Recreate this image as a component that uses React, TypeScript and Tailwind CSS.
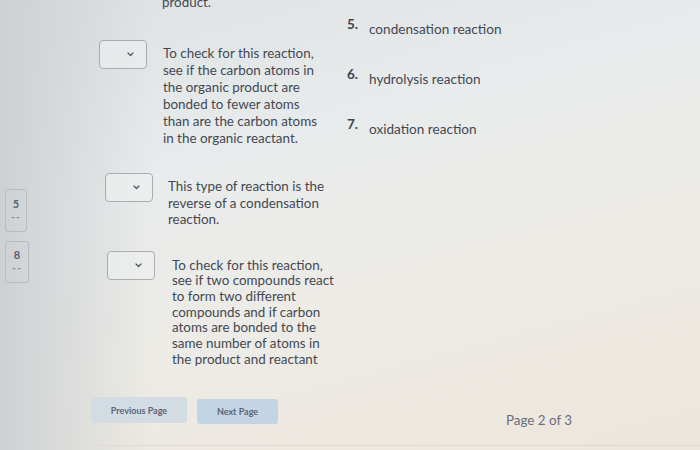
import React from "react"

const font = { fontFamily: "Lato, 'Open Sans', sans-serif" }

function Dropdown({ className }: { className?: string }) {
  return (
    <div className={`flex h-[29px] w-[48px] shrink-0 items-center justify-end rounded-[4px] border border-[#a9adb2] bg-[#eef0f0]/60 pr-[12px] ${className || ""}`}>
      <svg width="7" height="5" viewBox="0 0 7 5" fill="none">
        <path d="M1 1l2.5 2.5L6 1" stroke="#4d5563" strokeWidth="1.2" strokeLinecap="round" strokeLinejoin="round" />
      </svg>
    </div>
  )
}

function Lines({ lines, className }: { lines: string[]; className?: string }) {
  return (
    <div className={`text-[13.4px] text-[#434853] ${className || ""}`}>
      {lines.map((l) => (
        <div key={l}>{l}</div>
      ))}
    </div>
  )
}

function ScoreBox({ n, className }: { n: string; className?: string }) {
  return (
    <div className={`flex w-[22px] flex-col items-center rounded-[3px] border border-[#b9bcbc] text-[11px] font-bold text-[#5a6170] ${className || ""}`}>
      <div>{n}</div>
      <div className="leading-[8px] tracking-[1px] text-[#8a8f96]">--</div>
    </div>
  )
}

function Choice({ n, label, className }: { n: string; label: string; className?: string }) {
  return (
    <div className={`flex items-start ${className || ""}`}>
      <span className="w-[22px] text-[13.5px] font-bold text-[#3f4450]">{n}</span>
      <span className="mt-[5px] text-[13.6px] text-[#434853]">{label}</span>
    </div>
  )
}

export default function App() {
  return (
    <div
      style={font}
      className="relative h-[450px] w-[700px] overflow-hidden bg-[linear-gradient(165deg,#dde1e3_0%,#e9ecec_35%,#edebe5_65%,#ede6dc_100%)]"
    >
      <div className="pointer-events-none absolute inset-0 bg-[linear-gradient(90deg,#cdd1d3_0%,rgba(220,224,226,0)_22%)]" />
      <div className="relative flex h-full">
        {/* score boxes */}
        <div className="flex w-[30px] flex-col pl-[5px] pt-[189px]">
          <ScoreBox n="5" className="h-[43px] pt-[6px]" />
          <ScoreBox n="8" className="mt-[9px] h-[42px] w-[24px] pt-[5px]" />
        </div>

        {/* matching rows */}
        <div className="flex w-[317px] flex-col">
          <div className="-mt-[6px] ml-[132px] h-[17px] text-[13.4px] leading-[17px] text-[#434853]">product.</div>
          <div className="mt-[29px] flex items-start">
            <Dropdown className="ml-[69px]" />
            <Lines
              className="ml-[16px] mt-[5px] leading-[17px]"
              lines={[
                "To check for this reaction,",
                "see if the carbon atoms in",
                "the organic product are",
                "bonded to fewer atoms",
                "than are the carbon atoms",
                "in the organic reactant.",
              ]}
            />
          </div>
          <div className="mt-[26px] flex items-start">
            <Dropdown className="ml-[75px] h-[28px] w-[46px]" />
            <Lines
              className="ml-[15px] mt-[5px] leading-[16.5px]"
              lines={["This type of reaction is the", "reverse of a condensation", "reaction."]}
            />
          </div>
          <div className="mt-[23px] flex items-start">
            <Dropdown className="ml-[77px] h-[28px] w-[46px]" />
            <Lines
              className="ml-[17px] mt-[7px] leading-[15.7px]"
              lines={[
                "To check for this reaction,",
                "see if two compounds react",
                "to form two different",
                "compounds and if carbon",
                "atoms are bonded to the",
                "same number of atoms in",
                "the product and reactant",
              ]}
            />
          </div>
          <div className="mt-[30px] flex items-start">
            <button className="ml-[61px] h-[26px] w-[96px] rounded-[3px] bg-[#d2dce2] text-[9px] font-bold text-[#5b6576]">
              Previous Page
            </button>
            <button className="ml-[10px] mt-[2px] h-[25px] w-[81px] rounded-[3px] bg-[#c3d5e4] text-[9px] font-bold text-[#5b6576]">
              Next Page
            </button>
          </div>
        </div>

        {/* choices */}
        <div className="flex flex-1 flex-col pt-[14px]">
          <Choice n="5." label="condensation reaction" />
          <Choice n="6." label="hydrolysis reaction" className="mt-[25px]" />
          <Choice n="7." label="oxidation reaction" className="mt-[24px]" />
          <div className="ml-[159px] mt-[271px] text-[13.4px] text-[#696f7a]">Page 2 of 3</div>
        </div>
      </div>
      <div className="absolute bottom-[4px] left-[90px] right-[0px] h-px bg-[#dedbd4]" />
    </div>
  )
}
